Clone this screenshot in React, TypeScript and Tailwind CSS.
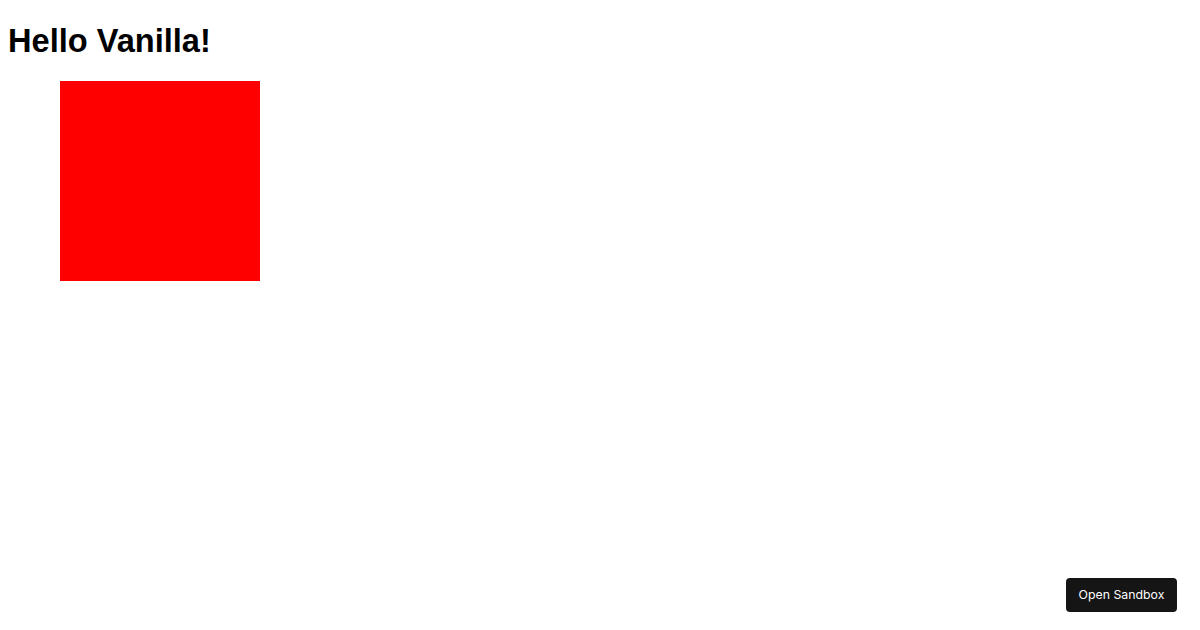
export default function App() {
  return (
    <div className="min-h-[630px] bg-white p-2 font-['Liberation_Sans',Arial,sans-serif] text-black">
      <h1 className="mt-[13.5px] text-[32.6px] font-bold leading-[37px]">Hello Vanilla!</h1>
      <div className="ml-[52px] mt-[22px] h-[200px] w-[200px] bg-[#ff0000]" />

      <button className="fixed bottom-[18px] right-[23px] flex h-[34px] w-[111px] items-center justify-center rounded-[4px] bg-[#151515] font-['Inter','Liberation_Sans',sans-serif] text-[12.3px] text-white">
        Open Sandbox
      </button>
    </div>
  )
}
